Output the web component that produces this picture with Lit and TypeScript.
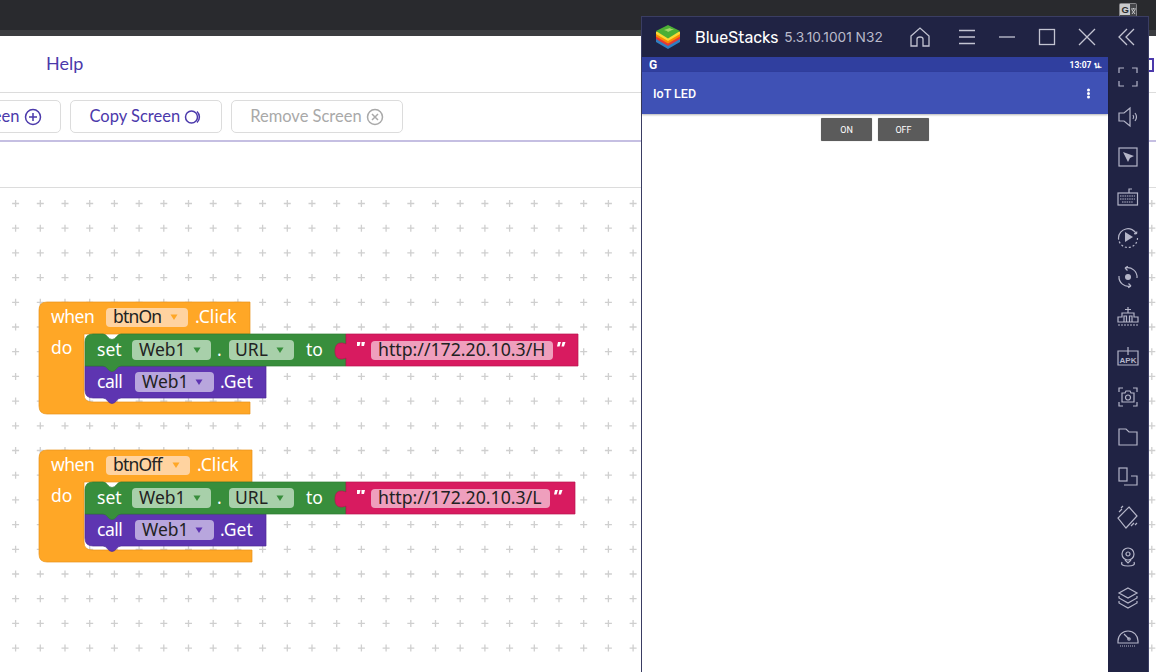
import { LitElement, html, css, svg } from "lit";
import { customElement } from "lit/decorators.js";

interface Stack {
  y: number;
  name: string;
  fieldW: number;
  right: number;
  pinkRight: number;
  url: string;
}

const STACKS: Stack[] = [
  { y: 302, name: "btnOn", fieldW: 82, right: 250, pinkRight: 578, url: "http://172.20.10.3/H" },
  { y: 450, name: "btnOff", fieldW: 84, right: 252, pinkRight: 575, url: "http://172.20.10.3/L" },
];

const NOTCH_DOWN = "c4 0 5 5.500 9 5.500s5-5.500 9-5.500";
const NOTCH_BACK = "c-4 0-5 5.500-9 5.500s-5-5.500-9-5.500";

function arrow(x: number, y: number, cls: string) {
  return svg`<path class=${cls} d="M${x - 3.5} ${y - 2.5}h7l-3.500 5.500z" />`;
}

function stackSvg(s: Stack) {
  const y = s.y;
  const orange = `M47 ${y}H${s.right}V${y + 32}H84V${y + 92}q0 8 8 8H${s.right}V${y + 112}H47q-8 0-8-8V${y + 8}q0-8 8-8z`;
  const green = `M93 ${y + 32}H103${NOTCH_DOWN}H346V${y + 64}H121${NOTCH_BACK}H85V${y + 40}q0-8 8-8z`;
  const purple = `M85 ${y + 64}H266V${y + 96}H121${NOTCH_BACK}H93q-8 0-8-8z`;
  const pink = `M346 ${y + 32}H${s.pinkRight}V${y + 64}H346V${y + 56}c-3 1-3 1-5 1-4 0-6-3-6-8s2-8 6-8c2 0 2 0 5 1z`;
  const fr = s.pinkRight - 27;
  return svg`
    <path class="orange" d=${orange} />
    <path class="purple" d=${purple} />
    <path class="green" d=${green} />
    <path class="pink" d=${pink} />

    <text class="bt tight" x="51" y=${y + 21}>when</text>
    <rect class="f-orange" x="106" y=${y + 6} width=${s.fieldW} height="19" rx="4" />
    <text class="bd tighter" x="113" y=${y + 21}>${s.name}</text>
    ${arrow(106 + s.fieldW - 14, y + 15, "a-orange")}
    <text class="bt" x=${106 + s.fieldW + 7} y=${y + 21}>.Click</text>
    <text class="bt" x="51" y=${y + 52}>do</text>

    <text class="bt" x="97" y=${y + 54}>set</text>
    <rect class="f-green" x="132" y=${y + 38} width="79" height="20" rx="4" />
    <text class="bd" x="139" y=${y + 54}>Web1</text>
    ${arrow(197, y + 48, "a-green")}
    <text class="bt" x="217" y=${y + 54}>.</text>
    <rect class="f-green" x="229" y=${y + 38} width="65" height="20" rx="4" />
    <text class="bd" x="235" y=${y + 54}>URL</text>
    ${arrow(280, y + 48, "a-green")}
    <text class="bt" x="306" y=${y + 54}>to</text>

    <text class="bt tight" x="97" y=${y + 86}>call</text>
    <rect class="f-purple" x="135" y=${y + 70} width="79" height="20" rx="4" />
    <text class="bd" x="142" y=${y + 86}>Web1</text>
    ${arrow(199, y + 80, "a-purple")}
    <text class="bt" x="220" y=${y + 86}>.Get</text>

    <path class="quote" d="M357 ${y + 40}h3.500l-1 4h-2.500zM361.500 ${y + 40}h3.500l-1 4h-2.500z" />
    <rect class="f-pink" x="371" y=${y + 39} width=${fr - 371 + 2} height="19" rx="4" />
    <text class="bd url" x="378" y=${y + 54}>${s.url}</text>
    <path class="quote" d="M${fr + 7} ${y + 40}h3l-1.500 4.500h-2.500zM${fr + 11.5} ${y + 40}h3l-1.500 4.500h-2.500z" />
  `;
}

const ICONS = [
  svg`<path d="M-9-4v-5h5M4-9h5v5M9 4v5h-5M-4 9h-5v-5" />`,
  svg`<path d="M-9-4h5l6-5v18l-6-5h-5zM5-2q1.500 2 0 4M7-4q3 4 0 8" />`,
  svg`<rect x="-9" y="-9" width="18" height="18" /><path class="fill" d="M-5-5l11 4-4 2-2 4z" />`,
  svg`<rect x="-10" y="-4" width="19.500" height="12" /><path d="M1-4v-4h3" /><path d="M-8-1h15M-8 2h15M-6 5h11" stroke-dasharray="1.500 .8" />`,
  svg`<path d="M-9.500 1a9.500 9.500 0 0 1 18-4M8.500-3l.3-2.500M8.500-3l-2.500-.3" /><path d="M9.500 1a9.500 9.500 0 0 1-19 0" stroke-dasharray="2 2" /><path class="fill" d="M-3-5l8 5-8 5z" />`,
  svg`<path d="M-3-9a9.500 9.500 0 0 1 12 10M-3-9l2.500 2.500M-3-9l2.800-1.800" /><path d="M3 9a9.500 9.500 0 0 1-12-10M3 9l-2.500-2.500M3 9l-2.800 1.800" /><circle class="fill" r="3" />`,
  svg`<path d="M-10 5v-5h4v-4h12v4h4v5zM-4 5v-6h2.500v6M1.500 5v-6h2.500v6M0-4v-6M-3-7.500h6" /><path d="M-10 8h20" stroke-dasharray="2 1" />`,
  svg`<path d="M-4-6h-6v14h20v-14h-6M0-10v8M-4-6h8" /><text class="apk" x="0" y="6">APK</text>`,
  svg`<path d="M-9-5v-4h4M5-9h4v4M9 5v4h-4M-5 9h-4v-4" /><path d="M-6-4h3l1-2h4l1 2h3v9h-12z" /><circle cy=".5" r="2.500" />`,
  svg`<path d="M-9-8h7l3 3h8v13h-18z" />`,
  svg`<rect x="-9" y="-9" width="8" height="13" /><path d="M3-1h6v9h-13" />`,
  svg`<path d="M1-10L9-1-2 11-10 1z" /><path d="M-9-5l3-3M-7-9l2-2M3 9l3-3M7 8l2-2" />`,
  svg`<circle cy="-3" r="6" /><circle cy="-3" r="2" /><path d="M-3 3l3 3 3-3M-6 5q-2 4 6 4t6-4" />`,
  svg`<path d="M0-9l9 5-9 5-9-5zM-9-1v2l9 5 9-5v-2M-9 4v2l9 5 9-5v-2" />`,
  svg`<path d="M-10 6v-2a10 10 0 0 1 20 0v2zM-4-3l5 5" /><circle cx="1" cy="2" r="1.200" /><path d="M-8 9h16" stroke-dasharray="1 1" />`,
];

@customElement("app-root")
export class AppRoot extends LitElement {
  static styles = css`
    :host {
      display: block;
      width: 1156px;
      height: 672px;
      position: relative;
      overflow: hidden;
      background: #fff;
      font-family: "Lato", "Noto Sans", sans-serif;
    }
    .page {
      display: flex;
      flex-direction: column;
      height: 100%;
    }
    .chrome {
      flex: none;
      height: 30px;
      background: #292a2e;
    }
    .chrome-line {
      flex: none;
      height: 6px;
      background: #3b3c40;
    }
    .translate {
      position: absolute;
      left: 1119px;
      top: 3px;
      width: 18px;
      height: 14px;
    }
    .translate .bg {
      fill: #45464a;
      stroke: #9a9b9e;
      stroke-width: 0.8;
    }
    .translate .g {
      fill: #c9cacc;
    }
    .translate .gl {
      font: 700 9.500px "Liberation Sans", sans-serif;
      fill: #2b2c30;
    }
    .translate .wen {
      fill: none;
      stroke: #c9cacc;
      stroke-width: 1;
    }
    .menu {
      flex: none;
      height: 57px;
      box-sizing: border-box;
      display: flex;
      align-items: center;
      padding: 0 0 2px 46px;
      color: #4b39ab;
      font-size: 18px;
      border-bottom: 1.500px solid #dcdcdc;
    }
    .toolbar {
      flex: none;
      height: 49px;
      box-sizing: border-box;
      display: flex;
      gap: 9px;
      padding-top: 7px;
      border-bottom: 2px solid #c5bfe2;
    }
    .tb {
      flex: none;
      box-sizing: border-box;
      height: 33px;
      display: flex;
      align-items: center;
      justify-content: flex-end;
      gap: 4px;
      padding: 0 18.500px 2px;
      border: 1px solid #dcdcdc;
      border-radius: 5px;
      color: #4b39ab;
      font-size: 16.500px;
      white-space: nowrap;
    }
    .tb.off {
      color: #a9a9a9;
    }
    .tb.first {
      width: 180px;
      margin-left: -119px;
    }
    .tb svg {
      width: 18px;
      height: 18px;
      fill: none;
      stroke: currentColor;
      stroke-width: 1.500;
      margin-top: 2px;
    }
    .subbar {
      flex: none;
      height: 46px;
      box-sizing: border-box;
      border-bottom: 1.500px solid #dcdcdc;
    }
    .canvas {
      flex: 1;
      position: relative;
      background: #fff;
    }
    .grid {
      position: absolute;
      inset: 0;
      width: 100%;
      height: 100%;
    }
    .grid path {
      stroke: #cfcfcf;
      stroke-width: 1.300;
      fill: none;
    }
    .blocks {
      position: absolute;
      left: 0;
      top: -188px;
      width: 1156px;
      height: 672px;
    }
    .blocks text {
      font-family: "Noto Sans", sans-serif;
      font-size: 17.500px;
    }
    .blocks text.url {
      font-size: 17.700px;
    }
    .tight {
      letter-spacing: -0.5px;
    }
    .tighter {
      letter-spacing: -0.8px;
    }
    .bt { fill: #fff; }
    .bd { fill: #222; }
    .orange { fill: #ffa726; stroke: #e8941a; stroke-width: .7; }
    .green { fill: #388e3c; stroke: #2e7d32; stroke-width: .7; }
    .purple { fill: #5e35b1; stroke: #4d2a96; stroke-width: .7; }
    .pink { fill: #d81b60; stroke: #b8144f; stroke-width: .7; }
    .f-orange { fill: #ffd3a0; }
    .f-green { fill: #a8d0aa; }
    .f-purple { fill: #b8a6dd; }
    .f-pink { fill: #ef9fbd; }
    .a-orange { fill: #ffa726; }
    .a-green { fill: #388e3c; }
    .a-purple { fill: #5e35b1; }
    .quote { fill: #fff; }
    .edge-icon {
      position: absolute;
      left: 1147px;
      top: 58px;
      width: 7px;
      height: 14px;
      border: 2px solid #4b39ab;
      border-left: 0;
      box-sizing: border-box;
    }
    .window {
      position: absolute;
      left: 641px;
      top: 16px;
      width: 508px;
      height: 656px;
      box-sizing: border-box;
      border: 1px solid #3a3d63;
      border-bottom: 0;
      background: #202344;
      display: flex;
      flex-direction: column;
    }
    .title {
      flex: none;
      height: 40px;
      display: flex;
      align-items: center;
      color: #fff;
    }
    .logo {
      width: 26px;
      height: 26px;
      margin-left: 13px;
      flex: none;
    }
    .brand {
      margin-left: 14px;
      font: 400 16px "Rubik", "Inter", "Roboto", sans-serif;
    }
    .ver {
      margin-left: 6px;
      font: 400 13.700px "Inter", "Roboto", sans-serif;
      color: #b9bacb;
    }
    .ctrls {
      margin-left: auto;
      margin-right: 1px;
      display: flex;
    }
    .ctrl {
      width: 40px;
      height: 40px;
      display: flex;
      align-items: center;
      justify-content: center;
    }
    .ctrl.home {
      margin-right: 7px;
    }
    .ctrl svg {
      width: 22px;
      height: 22px;
      fill: none;
      stroke: #c3c4d2;
      stroke-width: 1.300;
    }
    .body {
      flex: 1;
      display: flex;
      min-height: 0;
    }
    .phone {
      flex: 1;
      background: #fff;
      display: flex;
      flex-direction: column;
    }
    .status {
      flex: none;
      height: 15px;
      background: #303f9f;
      color: #fff;
      display: flex;
      align-items: center;
      justify-content: space-between;
      padding: 0 6px 0 7px;
    }
    .status b {
      font: 700 12px "Roboto", sans-serif;
    }
    .status span {
      font: 700 8.500px "Roboto", "Noto Sans", sans-serif;
    }
    .appbar {
      flex: none;
      height: 42px;
      box-sizing: border-box;
      background: #3f51b5;
      color: #fff;
      display: flex;
      align-items: center;
      justify-content: space-between;
      padding: 0 18.500px 0 11px;
      font: 500 12.500px "Roboto", sans-serif;
      box-shadow: 0 1px 2px rgba(0, 0, 0, 0.3);
    }
    .kebab {
      width: 3px;
      height: 3px;
      background: #fff;
      border-radius: 50%;
      box-shadow: 0 -3.500px 0 #fff, 0 3.500px 0 #fff;
    }
    .btns {
      display: flex;
      justify-content: center;
      gap: 6px;
      padding-top: 4px;
    }
    .btns div {
      width: 51px;
      height: 23px;
      background: #5b5b5b;
      color: #fff;
      border-radius: 1px;
      box-shadow: 0 0 1px rgba(0, 0, 0, 0.4);
      font: 400 9px "Roboto", sans-serif;
      display: flex;
      align-items: center;
      justify-content: center;
    }
    .side {
      flex: none;
      width: 40px;
      display: flex;
      flex-direction: column;
    }
    .side svg {
      flex: none;
      width: 40px;
      height: 40px;
      fill: none;
      stroke: #b4b5c8;
      stroke-width: 1.200;
    }
    .side .fill {
      fill: #b4b5c8;
      stroke: none;
    }
    .side .apk {
      font: 700 8px "Liberation Sans", sans-serif;
      fill: #b4b5c8;
      stroke: none;
      text-anchor: middle;
    }
  `;

  private grid() {
    let d = "";
    for (let x = 15.6; x < 1156; x += 24.7) {
      for (let y = 15.5; y < 484; y += 24.7) {
        d += `M${(x - 3.5).toFixed(1)} ${y.toFixed(1)}h7M${x.toFixed(1)} ${(y - 3.5).toFixed(1)}v7`;
      }
    }
    return d;
  }

  render() {
    return html`
      <div class="page">
        <div class="chrome"></div>
        <div class="chrome-line"></div>
        <div class="menu">Help</div>
        <div class="toolbar">
          <div class="tb first">
            Add Screen
            <svg viewBox="0 0 18 18"><circle cx="9" cy="9" r="7.500" /><path d="M9 5v8M5 9h8" /></svg>
          </div>
          <div class="tb">
            Copy Screen
            <svg viewBox="0 0 18 18"><circle cx="7.500" cy="9" r="6" /><path d="M13 3.500a7.500 7.500 0 0 1 0 11" /></svg>
          </div>
          <div class="tb off">
            Remove Screen
            <svg viewBox="0 0 18 18"><circle cx="9" cy="9" r="7.500" /><path d="M6 6l6 6M12 6l-6 6" /></svg>
          </div>
        </div>
        <div class="subbar"></div>
        <div class="canvas">
          <svg class="grid"><path d=${this.grid()} /></svg>
          <svg class="blocks" viewBox="0 0 1156 672">${STACKS.map(stackSvg)}</svg>
        </div>
      </div>

      <svg class="translate" viewBox="0 0 18 14">
        <rect class="bg" x=".5" y=".5" width="17" height="13" rx="1" />
        <rect class="g" x="1" y="1" width="10" height="11" />
        <text class="gl" x="2.500" y="10">G</text>
        <path class="wen" d="M12 6h5M14.500 5v1M13 7l3 4M16 7l-3 4" />
      </svg>
      <div class="edge-icon"></div>

      <div class="window">
        <div class="title">
          <svg class="logo" viewBox="0 0 26 26">
            <path fill="#2f7fc1" d="M1 18l12 7 12-7v-4L1 14z" />
            <path fill="#e53935" d="M1 15l12 7 12-7v-4L1 11z" />
            <path fill="#fb8c00" d="M1 12.500l12 7 12-7v-3L1 9.500z" />
            <path fill="#fdd835" d="M1 10l12 7 12-7V7.500L1 7.500z" />
            <path fill="#4caf35" d="M1 7l12-6 12 6-12 7.500z" />
            <path fill="#a5d66b" d="M9 6l6-2 1 1 3 0-6 3-1-1z" />
          </svg>
          <span class="brand">BlueStacks</span>
          <span class="ver">5.3.10.1001 N32</span>
          <div class="ctrls">
            <div class="ctrl home">
              <svg viewBox="0 0 22 22"><path d="M2 10l9-8 9 8v10h-6v-7q0-2-3-2t-3 2v7H2z" /></svg>
            </div>
            <div class="ctrl"><svg viewBox="0 0 22 22"><path d="M3 4.500h16M3 11h16M3 17.500h16" /></svg></div>
            <div class="ctrl"><svg viewBox="0 0 22 22"><path d="M3 11h16" /></svg></div>
            <div class="ctrl"><svg viewBox="0 0 22 22"><rect x="3.500" y="3.500" width="15" height="15" /></svg></div>
            <div class="ctrl"><svg viewBox="0 0 22 22"><path d="M3 3l16 16M19 3L3 19" /></svg></div>
            <div class="ctrl"><svg viewBox="0 0 22 22"><path d="M11 3l-8 8 8 8M18 3l-8 8 8 8" /></svg></div>
          </div>
        </div>
        <div class="body">
          <div class="phone">
            <div class="status"><b>G</b><span>13:07 น.</span></div>
            <div class="appbar"><span>IoT LED</span><div class="kebab"></div></div>
            <div class="btns"><div>ON</div><div>OFF</div></div>
          </div>
          <div class="side">
            ${ICONS.map((i) => html`<svg viewBox="-20 -20 40 40">${i}</svg>`)}
          </div>
        </div>
      </div>
    `;
  }
}
